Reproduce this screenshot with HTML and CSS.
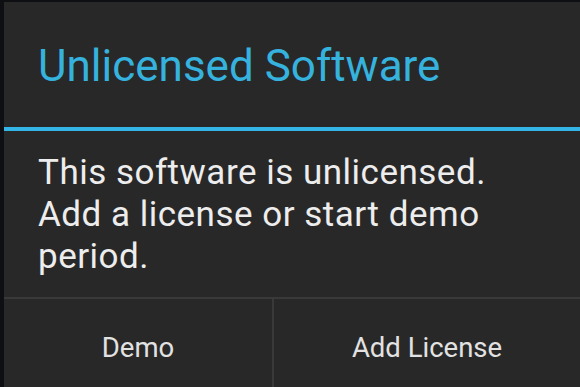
FILE: index.html
```html
<!DOCTYPE html>
<html>
<head>
<meta charset="utf-8">
<link rel="stylesheet" href="styles.css">
</head>
<body>
<div class="screen">
  <div class="dialog">
    <div class="title">Unlicensed Software</div>
    <div class="title-rule"></div>
    <div class="message">This software is unlicensed.<br>Add a license or start demo<br>period.</div>
    <div class="buttons">
      <div class="btn">Demo</div>
      <div class="btn">Add License</div>
    </div>
  </div>
</div>
</body>
</html>
```

FILE: styles.css
```css
html, body {
  margin: 0;
  padding: 0;
  background: #0d0f12;
  width: 580px;
  height: 387px;
  overflow: hidden;
}
.screen {
  padding: 2px 0 0 4px;
  height: 387px;
  box-sizing: border-box;
}
.dialog {
  background: #282828;
  height: 100%;
  display: flex;
  flex-direction: column;
  font-family: Roboto, "Liberation Sans", sans-serif;
}
.title {
  color: #35b2de;
  font-size: 44px;
  line-height: 52px;
  padding: 38px 0 35px 34px;
  white-space: nowrap;
}
.title-rule {
  height: 4px;
  background: #33b5e5;
}
.message {
  color: #ededed;
  font-size: 35px;
  letter-spacing: 0.5px;
  line-height: 42px;
  padding: 21px 0 19px 34px;
  border-bottom: 2px solid #393939;
  white-space: nowrap;
}
.buttons {
  display: flex;
  flex: 1;
}
.btn {
  flex: 1;
  text-align: center;
  color: #e2e2e2;
  font-size: 27.5px;
  line-height: 32px;
  padding-top: 33px;
}
.btn:first-child {
  flex: 0 0 268px;
  border-right: 2px solid #393939;
}
```
